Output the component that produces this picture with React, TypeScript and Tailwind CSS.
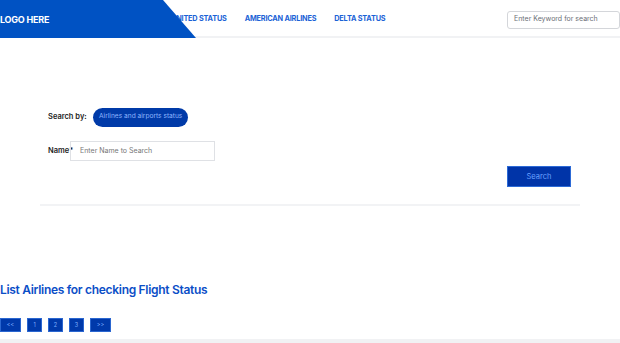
import React from "react";

export default function App() {
  const font = { fontFamily: "Inter, 'Liberation Sans', sans-serif" };
  return (
    <div className="w-[620px] h-[343px] bg-white overflow-hidden relative" style={font}>
      <header className="relative h-[38px] flex items-center border-b-2 border-[#f1f2f4]">
        <nav className="flex items-center gap-[18px] pl-[171px] pt-[2px] text-[7.3px] font-bold text-[#1a62d6] tracking-tight">
          <span>UNITED STATUS</span>
          <span>AMERICAN AIRLINES</span>
          <span>DELTA STATUS</span>
        </nav>
        <div className="ml-auto mt-[3px] w-[113px] h-[18px] border border-[#d4d6da] rounded-[3px] flex items-center px-[6px] text-[7px] text-[#6b6f76]">
          Enter Keyword for search
        </div>
        <div className="absolute left-0 top-0 w-[196px] h-[38px] bg-[#0052c3] [clip-path:polygon(0_0,163px_0,196px_38px,0_38px)] flex items-center pt-[1px]">
          <span className="text-white font-bold text-[9px] tracking-tight">LOGO HERE</span>
        </div>
      </header>
      <main className="px-[40px]">
        <div className="pl-[8px] pt-[69px]">
          <div className="flex items-center h-[20px]">
            <span className="text-[7.5px] font-semibold text-[#222] w-[45px]">Search by:</span>
            <span className="h-[19px] px-[6px] rounded-full bg-[#003aa8] text-[#8fb6ff] text-[6.6px] flex items-center">Airlines and airports status</span>
          </div>
          <div className="flex items-center mt-[14px] h-[20px]">
            <span className="text-[7.5px] font-semibold text-[#222] w-[22px]">Name*</span>
            <div className="w-[145px] h-[20px] border border-[#dfe1e5] flex items-center px-[9px] text-[7px] text-[#777]">Enter Name to Search</div>
          </div>
        </div>
        <div className="flex justify-end pr-[9px] mt-[5px]">
          <button className="w-[64px] h-[21px] bg-[#0034a8] border border-[#2c6ad6] text-[#6aa2ff] text-[7.5px]">Search</button>
        </div>
        <div className="mt-[17px] h-[2px] bg-[#f2f3f5]" />
      </main>
      <section className="mt-[76px]">
        <h2 className="text-[12px] font-semibold text-[#0b4ec7] leading-[16px] tracking-tight">List Airlines for checking Flight Status</h2>
        <div className="flex gap-[6px] mt-[20px]">
          {["<<", "1", "2", "3", ">>"].map((t) => (
            <span key={t} className={`${t.length > 1 ? "w-[21px]" : "w-[15px]"} h-[14px] bg-[#0039aa] border border-[#2a66d0] text-[#7fb0ff] text-[5.5px] flex items-center justify-center`}>{t}</span>
          ))}
        </div>
      </section>
      <div className="absolute left-0 right-0 bottom-0 h-[4px] bg-[#f1f2f4]" />
    </div>
  );
}
